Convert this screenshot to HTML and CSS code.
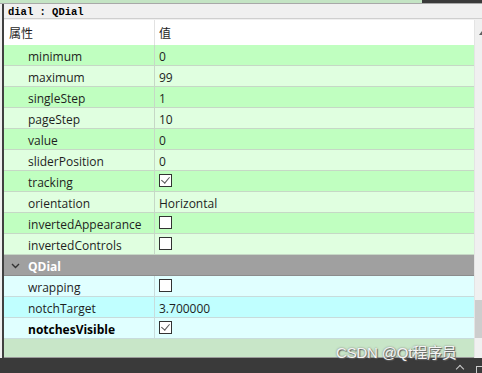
FILE: index.html
```html
<!DOCTYPE html>
<html lang="zh">
<head>
    <meta charset="UTF-8">
    <title>dial : QDial</title>
    <link rel="stylesheet" href="styles.css">
</head>
<body>
    <div class="top-strip">
        <div class="top-green"></div>
        <div class="top-dark"></div>
    </div>

    <div class="panel">
        <div class="title">dial : QDial</div>

        <div class="view">
            <div class="table">
                <div class="head">
                    <div class="name">属性</div>
                    <div class="val">值</div>
                </div>

                <div class="row green"><div class="name">minimum</div><div class="val">0</div></div>
                <div class="row light"><div class="name">maximum</div><div class="val">99</div></div>
                <div class="row green"><div class="name">singleStep</div><div class="val">1</div></div>
                <div class="row light"><div class="name">pageStep</div><div class="val">10</div></div>
                <div class="row green"><div class="name">value</div><div class="val">0</div></div>
                <div class="row light"><div class="name">sliderPosition</div><div class="val">0</div></div>
                <div class="row green"><div class="name">tracking</div><div class="val"><span class="check on"></span></div></div>
                <div class="row light"><div class="name">orientation</div><div class="val">Horizontal</div></div>
                <div class="row green"><div class="name">invertedAppearance</div><div class="val"><span class="check"></span></div></div>
                <div class="row light"><div class="name">invertedControls</div><div class="val"><span class="check"></span></div></div>

                <div class="group">
                    <span class="chevron">
                        <svg width="9" height="6" viewBox="0 0 9 6"><path d="M1 1 L4.5 4.5 L8 1" fill="none" stroke="#333" stroke-width="1.4"/></svg>
                    </span>
                    <span class="group-name">QDial</span>
                </div>

                <div class="row cyan"><div class="name">wrapping</div><div class="val"><span class="check"></span></div></div>
                <div class="row cyan-dark"><div class="name">notchTarget</div><div class="val">3.700000</div></div>
                <div class="row cyan"><div class="name bold">notchesVisible</div><div class="val"><span class="check on"></span></div></div>

                <div class="filler"></div>
            </div>

            <div class="scrollbar">
                <div class="arrow"></div>
                <div class="track"></div>
                <div class="thumb"></div>
                <div class="track-end"></div>
            </div>
        </div>
    </div>

    <div class="bottom-bar">
        <span class="bar-icon up"></span>
        <span class="bar-icon box"></span>
    </div>

    <div class="watermark">CSDN @Qt程序员</div>
</body>
</html>
```

FILE: styles.css
```css
body {
    margin: 0;
    padding: 0;
    width: 482px;
    height: 373px;
    overflow: hidden;
    position: relative;
    background: #f0f0f0;
    font-family: "Open Sans", "Noto Sans CJK SC", sans-serif;
    font-size: 12px;
    color: #1e1e1e;
}
.top-strip {
    display: flex;
    height: 3px;
    border-bottom: 1px solid #a8a8a8;
}
.top-green {
    width: 422px;
    background: #c4e4c4;
}
.top-dark {
    flex: 1;
    background: #3a3a3a;
}
.panel {
    margin-left: 2px;
    border-left: 2px solid #404040;
    height: 354px;
    display: flex;
    flex-direction: column;
}
.title {
    height: 14px;
    line-height: 16px;
    padding-left: 4px;
    font-family: "Liberation Mono", monospace;
    font-size: 10.5px;
    font-weight: bold;
    color: #000;
    border-bottom: 1px solid #cfcfcf;
    margin-bottom: 1px;
    overflow: hidden;
}
.view {
    flex: 1;
    display: flex;
}
.table {
    width: 470px;
    display: flex;
    flex-direction: column;
}
.head {
    display: flex;
    height: 25px;
    line-height: 25px;
    background: #fff;
    font-family: "Noto Sans CJK SC", sans-serif;
    font-size: 12px;
}
.head .name {
    width: 145px;
    padding-left: 5px;
    border-right: 1px solid #e2e2e2;
}
.head .val {
    padding-left: 4px;
}
.row {
    display: flex;
    height: 20px;
    line-height: 24px;
    overflow: hidden;
    border-bottom: 1px solid #c6d8c6;
}
.row .name {
    width: 126px;
    padding-left: 24px;
    border-right: 1px solid #c6d8c6;
}
.row .val {
    padding-left: 4px;
}
.name.bold {
    font-weight: bold;
    color: #000;
}
.green {
    background: #c0ffc0;
}
.light {
    background: #e0ffe0;
}
.cyan {
    background: #e0ffff;
    border-bottom-color: #c8dcdc;
}
.cyan-dark {
    background: #c0ffff;
    border-bottom-color: #c8dcdc;
}
.cyan .name, .cyan-dark .name {
    border-right-color: #c8dcdc;
}
.group {
    display: flex;
    align-items: center;
    height: 20px;
    background: #a0a0a0;
    border-bottom: 1px solid #8c8c8c;
}
.chevron {
    width: 22px;
    display: flex;
    justify-content: center;
    padding-top: 1px;
}
.group-name {
    font-weight: bold;
    color: #fff;
    padding-left: 2px;
    padding-top: 2px;
}
.check {
    display: inline-block;
    vertical-align: top;
    margin-top: 3px;
    width: 11px;
    height: 11px;
    border: 1px solid #333;
    background: #fff;
    position: relative;
}
.check.on::after {
    content: "";
    position: absolute;
    left: 3px;
    top: 0px;
    width: 4px;
    height: 7px;
    border-right: 1.5px solid #555;
    border-bottom: 1.5px solid #555;
    transform: rotate(40deg);
}
.filler {
    flex: 1;
    background: #c8e6c8;
    border-bottom: 1px solid #9a9a9a;
}
.scrollbar {
    flex: 1;
    display: flex;
    flex-direction: column;
    border-left: 1px solid #e4e4e4;
    background: #f0f0f0;
}
.arrow {
    height: 14px;
    margin-top: 6px;
    position: relative;
}
.arrow::after {
    content: "";
    position: absolute;
    left: 4px;
    top: 5px;
    border-left: 3px solid transparent;
    border-right: 3px solid transparent;
    border-bottom: 4px solid #606060;
}
.track {
    height: 260px;
}
.thumb {
    height: 38px;
    background: #cdcdcd;
}
.track-end {
    flex: 1;
}
.bottom-bar {
    height: 15px;
    background: #3a3a3a;
    position: relative;
}
.bar-icon {
    position: absolute;
    top: 8px;
}
.bar-icon.up {
    left: 457px;
    width: 5px;
    height: 5px;
    border-left: 1px solid #ccc;
    border-top: 1px solid #ccc;
    transform: rotate(45deg);
}
.bar-icon.box {
    left: 476px;
    width: 8px;
    height: 7px;
    border: 1px solid #ccc;
}
.watermark {
    position: absolute;
    left: 336px;
    top: 341px;
    font-family: "Liberation Sans", "Noto Sans CJK SC", sans-serif;
    font-size: 15px;
    color: #f4f4f4;
    text-shadow: 0 0 2px #777, 1px 1px 1px #555;
    letter-spacing: -0.2px;
}
```
